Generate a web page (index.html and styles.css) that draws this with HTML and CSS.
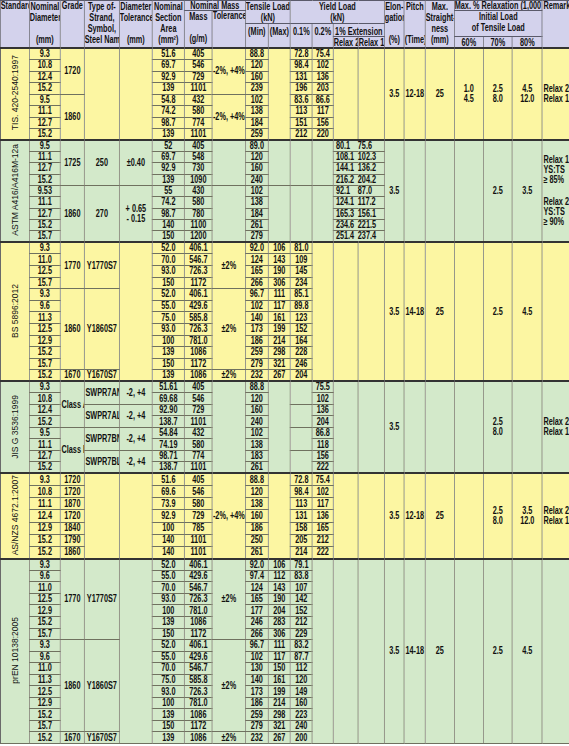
FILE: index.html
```html
<!DOCTYPE html>
<html>
<head>
<meta charset="utf-8">
<link rel="stylesheet" href="styles.css">
</head>
<body>
<table class="spec">
<colgroup>
<col class="w29"><col class="w31"><col class="w24"><col class="w35"><col class="w33"><col class="w32"><col class="w28"><col class="w33"><col class="w23"><col class="w22"><col class="w22"><col class="w21"><col class="w25"><col class="w26"><col class="w20"><col class="w21"><col class="w29"><col class="w29"><col class="w29"><col class="w30"><col class="w27">
</colgroup>
<thead>
<tr class="h1">
<th rowspan="4">Standard</th>
<th rowspan="4"><div class="ml">Nominal<br>Diameter<br><br>(mm)</div></th>
<th rowspan="4">Grade</th>
<th rowspan="4"><div class="ml">Type of-<br>Strand,<br>Symbol,<br>Steel Name</div></th>
<th rowspan="4"><div class="ml">Diameter<br>Tolerance<br><br>(mm)</div></th>
<th rowspan="4"><div class="ml">Nominal<br>Section<br>Area<br>(mm²)</div></th>
<th colspan="2">Nominal Mass</th>
<th colspan="2" rowspan="2"><div class="ml">Tensile Load<br>(kN)</div></th>
<th colspan="4" rowspan="2"><div class="ml">Yield Load<br>(kN)</div></th>
<th rowspan="4"><div class="ml">Elon-<br>gation<br><br>(%)</div></th>
<th rowspan="4"><div class="ml">Pitch<br><br><br>(Time)</div></th>
<th rowspan="4"><div class="ml">Max.<br>Straight-<br>ness<br>(mm)</div></th>
<th colspan="3">Max. % Relaxation (1,000 hours)</th>
<th rowspan="4" class="hl last">Remarks</th>
</tr>
<tr class="h2">
<th rowspan="3"><div class="ml">Mass<br><br>(g/m)</div></th>
<th rowspan="3">Tolerance</th>
<th colspan="3" rowspan="2"><div class="ml">Initial Load<br>of Tensile Load</div></th>
</tr>
<tr class="h3">
<th rowspan="2">(Min)</th>
<th rowspan="2">(Max)</th>
<th rowspan="2">0.1%</th>
<th rowspan="2">0.2%</th>
<th colspan="2">1% Extension</th>
</tr>
<tr class="h4">
<th>Relax 2</th><th>Relax 1</th>
<th>60%</th><th>70%</th><th>80%</th>
</tr>
</thead>

<tbody class="yel tis">
<tr><td rowspan="8" class="std"><span>TIS. 420-2540:1997</span></td><td>9.3</td><td rowspan="4">1720</td><td rowspan="8"></td><td rowspan="8"></td><td>51.6</td><td>405</td><td rowspan="4">-2%, +4%</td><td>88.8</td><td rowspan="8"></td><td>72.8</td><td>75.4</td><td rowspan="8"></td><td rowspan="8"></td><td rowspan="8">3.5</td><td rowspan="8">12-18</td><td rowspan="8">25</td><td rowspan="8">1.0<br>4.5</td><td rowspan="8">2.5<br>8.0</td><td rowspan="8">4.5<br>12.0</td><td rowspan="8" class="rm">Relax 2<br>Relax 1</td></tr>
<tr><td>10.8</td><td>69.7</td><td>546</td><td>120</td><td>98.4</td><td>102</td></tr>
<tr><td>12.4</td><td>92.9</td><td>729</td><td>160</td><td>131</td><td>136</td></tr>
<tr><td>15.2</td><td>139</td><td>1101</td><td>239</td><td>196</td><td>203</td></tr>
<tr><td>9.5</td><td rowspan="4">1860</td><td>54.8</td><td>432</td><td rowspan="4">-2%, +4%</td><td>102</td><td>83.6</td><td>86.6</td></tr>
<tr><td>11.1</td><td>74.2</td><td>580</td><td>138</td><td>113</td><td>117</td></tr>
<tr><td>12.7</td><td>98.7</td><td>774</td><td>184</td><td>151</td><td>156</td></tr>
<tr><td>15.2</td><td>139</td><td>1101</td><td>259</td><td>212</td><td>220</td></tr>
</tbody>

<tbody class="grn astm">
<tr><td rowspan="9" class="std"><span>ASTM A416/A416M-12a</span></td><td>9.5</td><td rowspan="4">1725</td><td rowspan="4">250</td><td rowspan="4">±0.40</td><td>52</td><td>405</td><td rowspan="4"></td><td>89.0</td><td rowspan="4"></td><td rowspan="4"></td><td rowspan="4"></td><td colspan="2" class="pair"><span>80.1</span>75.6</td><td rowspan="9">3.5</td><td rowspan="9"></td><td rowspan="9"></td><td rowspan="9"></td><td rowspan="9">2.5</td><td rowspan="9">3.5</td><td rowspan="9" class="rm"><div class="rmg">Relax 1<br>YS:TS<br>≥ 85%</div><div class="rmg">Relax 2<br>YS:TS<br>≥ 90%</div></td></tr>
<tr><td>11.1</td><td>69.7</td><td>548</td><td>120</td><td colspan="2" class="pair"><span>108.1</span>102.3</td></tr>
<tr><td>12.7</td><td>92.9</td><td>730</td><td>160</td><td colspan="2" class="pair"><span>144.1</span>136.2</td></tr>
<tr><td>15.2</td><td>139</td><td>1090</td><td>240</td><td colspan="2" class="pair"><span>216.2</span>204.2</td></tr>
<tr><td>9.53</td><td rowspan="5">1860</td><td rowspan="5">270</td><td rowspan="5">+ 0.65<br>- 0.15</td><td>55</td><td>430</td><td rowspan="5"></td><td>102</td><td rowspan="5"></td><td rowspan="5"></td><td rowspan="5"></td><td colspan="2" class="pair"><span>92.1</span>87.0</td></tr>
<tr><td>11.1</td><td>74.2</td><td>580</td><td>138</td><td colspan="2" class="pair"><span>124.1</span>117.2</td></tr>
<tr><td>12.7</td><td>98.7</td><td>780</td><td>184</td><td colspan="2" class="pair"><span>165.3</span>156.1</td></tr>
<tr><td>15.2</td><td>140</td><td>1100</td><td>261</td><td colspan="2" class="pair"><span>234.6</span>221.5</td></tr>
<tr><td>15.7</td><td>150</td><td>1200</td><td>279</td><td colspan="2" class="pair"><span>251.4</span>237.4</td></tr>
</tbody>

<tbody class="yel bs">
<tr><td rowspan="12" class="std"><span>BS 5896:2012</span></td><td>9.3</td><td rowspan="4">1770</td><td rowspan="4">Y1770S7</td><td rowspan="12"></td><td>52.0</td><td>406.1</td><td rowspan="4">±2%</td><td>92.0</td><td>106</td><td>81.0</td><td rowspan="12"></td><td rowspan="12"></td><td rowspan="12"></td><td rowspan="12">3.5</td><td rowspan="12">14-18</td><td rowspan="12">25</td><td rowspan="12"></td><td rowspan="12">2.5</td><td rowspan="12">4.5</td><td rowspan="12"></td></tr>
<tr><td>11.0</td><td>70.0</td><td>546.7</td><td>124</td><td>143</td><td>109</td></tr>
<tr><td>12.5</td><td>93.0</td><td>726.3</td><td>165</td><td>190</td><td>145</td></tr>
<tr><td>15.7</td><td>150</td><td>1172</td><td>266</td><td>306</td><td>234</td></tr>
<tr><td>9.3</td><td rowspan="7">1860</td><td rowspan="7">Y1860S7</td><td>52.0</td><td>406.1</td><td rowspan="7">±2%</td><td>96.7</td><td>111</td><td>85.1</td></tr>
<tr><td>9.6</td><td>55.0</td><td>429.6</td><td>102</td><td>117</td><td>89.8</td></tr>
<tr><td>11.3</td><td>75.0</td><td>585.8</td><td>140</td><td>161</td><td>123</td></tr>
<tr><td>12.5</td><td>93.0</td><td>726.3</td><td>173</td><td>199</td><td>152</td></tr>
<tr><td>12.9</td><td>100</td><td>781.0</td><td>186</td><td>214</td><td>164</td></tr>
<tr><td>15.2</td><td>139</td><td>1086</td><td>259</td><td>298</td><td>228</td></tr>
<tr><td>15.7</td><td>150</td><td>1172</td><td>279</td><td>321</td><td>246</td></tr>
<tr><td>15.2</td><td>1670</td><td>Y1670S7</td><td>139</td><td>1086</td><td>±2%</td><td>232</td><td>267</td><td>204</td></tr>
</tbody>

<tbody class="grn jis">
<tr><td rowspan="8" class="std"><span>JIS G 3536:1999</span></td><td>9.3</td><td rowspan="4" class="l">Class A</td><td rowspan="2" class="l">SWPR7AN</td><td rowspan="2">-2, +4</td><td>51.61</td><td>405</td><td rowspan="8"></td><td>88.8</td><td rowspan="8"></td><td rowspan="2"></td><td>75.5</td><td rowspan="8"></td><td rowspan="8"></td><td rowspan="8">3.5</td><td rowspan="8"></td><td rowspan="8"></td><td rowspan="8"></td><td rowspan="8">2.5<br>8.0</td><td rowspan="8"></td><td rowspan="8" class="rm">Relax 2<br>Relax 1</td></tr>
<tr><td>10.8</td><td>69.68</td><td>546</td><td>120</td><td>102</td></tr>
<tr><td>12.4</td><td rowspan="2" class="l">SWPR7AL</td><td rowspan="2">-2, +4</td><td>92.90</td><td>729</td><td>160</td><td rowspan="2"></td><td>136</td></tr>
<tr><td>15.2</td><td>138.7</td><td>1101</td><td>240</td><td>204</td></tr>
<tr><td>9.5</td><td rowspan="4" class="l">Class B</td><td rowspan="2" class="l">SWPR7BN</td><td rowspan="2">-2, +4</td><td>54.84</td><td>432</td><td>102</td><td rowspan="2"></td><td>86.8</td></tr>
<tr><td>11.1</td><td>74.19</td><td>580</td><td>138</td><td>118</td></tr>
<tr><td>12.7</td><td rowspan="2" class="l">SWPR7BL</td><td rowspan="2">-2, +4</td><td>98.71</td><td>774</td><td>183</td><td rowspan="2"></td><td>156</td></tr>
<tr><td>15.2</td><td>138.7</td><td>1101</td><td>261</td><td>222</td></tr>
</tbody>

<tbody class="yel asnzs">
<tr><td rowspan="7" class="std"><span>AS/NZS 4672.1:2007</span></td><td>9.3</td><td>1720</td><td rowspan="7"></td><td rowspan="7"></td><td>51.6</td><td>405</td><td rowspan="7">-2%, +4%</td><td>88.8</td><td rowspan="7"></td><td>72.8</td><td>75.4</td><td rowspan="7"></td><td rowspan="7"></td><td rowspan="7">3.5</td><td rowspan="7">12-18</td><td rowspan="7">25</td><td rowspan="7"></td><td rowspan="7">2.5<br>8.0</td><td rowspan="7">3.5<br>12.0</td><td rowspan="7" class="rm">Relax 2<br>Relax 1</td></tr>
<tr><td>10.8</td><td>1720</td><td>69.6</td><td>546</td><td>120</td><td>98.4</td><td>102</td></tr>
<tr><td>11.1</td><td>1870</td><td>73.9</td><td>580</td><td>138</td><td>113</td><td>117</td></tr>
<tr><td>12.4</td><td>1720</td><td>92.9</td><td>729</td><td>160</td><td>131</td><td>136</td></tr>
<tr><td>12.9</td><td>1840</td><td>100</td><td>785</td><td>186</td><td>158</td><td>165</td></tr>
<tr><td>15.2</td><td>1790</td><td>140</td><td>1101</td><td>250</td><td>205</td><td>212</td></tr>
<tr><td>15.2</td><td>1860</td><td>140</td><td>1101</td><td>261</td><td>214</td><td>222</td></tr>
</tbody>

<tbody class="grn pren">
<tr><td rowspan="16" class="std"><span>prEN 10138:2005</span></td><td>9.3</td><td rowspan="7">1770</td><td rowspan="7">Y1770S7</td><td rowspan="16"></td><td>52.0</td><td>406.1</td><td rowspan="7">±2%</td><td>92.0</td><td>106</td><td>79.1</td><td rowspan="16"></td><td rowspan="16"></td><td rowspan="16"></td><td rowspan="16">3.5</td><td rowspan="16">14-18</td><td rowspan="16">25</td><td rowspan="16"></td><td rowspan="16">2.5</td><td rowspan="16">4.5</td><td rowspan="16"></td></tr>
<tr><td>9.6</td><td>55.0</td><td>429.6</td><td>97.4</td><td>112</td><td>83.8</td></tr>
<tr><td>11.0</td><td>70.0</td><td>546.7</td><td>124</td><td>143</td><td>107</td></tr>
<tr><td>12.5</td><td>93.0</td><td>726.3</td><td>165</td><td>190</td><td>142</td></tr>
<tr><td>12.9</td><td>100</td><td>781.0</td><td>177</td><td>204</td><td>152</td></tr>
<tr><td>15.2</td><td>139</td><td>1086</td><td>246</td><td>283</td><td>212</td></tr>
<tr><td>15.7</td><td>150</td><td>1172</td><td>266</td><td>306</td><td>229</td></tr>
<tr><td>9.3</td><td rowspan="8">1860</td><td rowspan="8">Y1860S7</td><td>52.0</td><td>406.1</td><td rowspan="8">±2%</td><td>96.7</td><td>111</td><td>83.2</td></tr>
<tr><td>9.6</td><td>55.0</td><td>429.6</td><td>102</td><td>117</td><td>87.7</td></tr>
<tr><td>11.0</td><td>70.0</td><td>546.7</td><td>130</td><td>150</td><td>112</td></tr>
<tr><td>11.3</td><td>75.0</td><td>585.8</td><td>140</td><td>161</td><td>120</td></tr>
<tr><td>12.5</td><td>93.0</td><td>726.3</td><td>173</td><td>199</td><td>149</td></tr>
<tr><td>12.9</td><td>100</td><td>781.0</td><td>186</td><td>214</td><td>160</td></tr>
<tr><td>15.2</td><td>139</td><td>1086</td><td>259</td><td>298</td><td>223</td></tr>
<tr><td>15.7</td><td>150</td><td>1172</td><td>279</td><td>321</td><td>240</td></tr>
<tr><td>15.2</td><td>1670</td><td>Y1670S7</td><td>139</td><td>1086</td><td>±2%</td><td>232</td><td>267</td><td>200</td></tr>
</tbody>
</table>
</body>
</html>
```
FILE: styles.css
```css
html, body {
  margin: 0;
  padding: 0;
  overflow: hidden;
  background: #ffffff;
}

/* The source uses a condensed face; the table is laid out wide and
   narrowed horizontally so Liberation Sans reads as condensed. */
.spec {
  border-collapse: collapse;
  table-layout: fixed;
  width: 779.45px;
  transform: scaleX(0.73);
  transform-origin: 0 0;
  font-family: "Liberation Sans", Arial, sans-serif;
  font-size: 10px;
  font-weight: bold;
  color: #111111;
}

.w20 { width: 27.40px; }
.w21 { width: 28.77px; }
.w22 { width: 30.14px; }
.w23 { width: 31.51px; }
.w24 { width: 32.88px; }
.w25 { width: 34.25px; }
.w26 { width: 35.62px; }
.w27 { width: 36.99px; }
.w28 { width: 38.36px; }
.w29 { width: 39.73px; }
.w30 { width: 41.10px; }
.w31 { width: 42.47px; }
.w32 { width: 43.84px; }
.w33 { width: 45.21px; }
.w35 { width: 47.95px; }

.spec th,
.spec td {
  padding: 0;
  overflow: hidden;
  white-space: nowrap;
  text-align: center;
  line-height: 10px;
  border: 1px solid #6f715f;
}

.spec th:last-child,
.spec td:last-child {
  border-right: 0;
}

.spec thead th {
  background: #d3d2ec;
  font-weight: bold;
  vertical-align: top;
  border-color: #5a5a6a;
  line-height: 9px;
}

.spec thead .ml {
  line-height: 11px;
}

.spec thead .hl {
  text-align: left;
  padding-left: 1px;
}

.spec thead .last {
  border-right: 0;
}

.h1 { height: 10px; }
.h2 { height: 11px; }
.h3 { height: 13px; }
.h4 { height: 11px; }

.h3 th { padding-top: 3px; }
.h4 th { padding-top: 1px; }

.spec tbody td {
  vertical-align: middle;
}

.yel td { background: #fcf6a2; }
.grn td { background: #d3e9ca; }

.spec tbody tr:first-child td {
  border-top: 2px solid #333333;
}

.tis tr { height: 11.5px; }
.astm tr { height: 11.33px; }
.bs tr { height: 11.6px; }
.jis tr { height: 11.5px; }
.asnzs tr { height: 12.2px; }
.pren tr { height: 11.55px; }

.spec td.std {
  border-left: 1px solid #333333;
  font-weight: normal;
}

.std span {
  display: inline-block;
  writing-mode: vertical-rl;
  transform: scaleX(1.37) rotate(180deg);
  white-space: nowrap;
  font-size: 8.5px;
  line-height: 12px;
}

.spec td.l {
  text-align: left;
  padding-left: 1px;
}

.spec td.rm {
  text-align: left;
  padding-left: 1px;
}

.rmg + .rmg {
  margin-top: 12px;
}

.spec td.pair {
  text-align: left;
  padding-left: 3px;
}

.pair span {
  display: inline-block;
  width: 30px;
}
```
